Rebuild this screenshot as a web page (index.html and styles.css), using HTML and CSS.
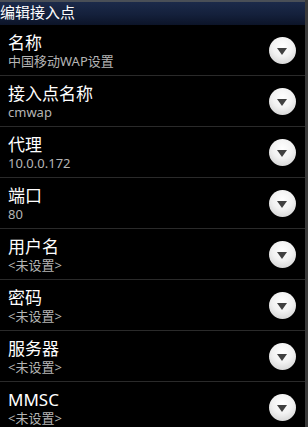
FILE: index.html
```html
<!DOCTYPE html>
<html lang="zh-CN">
<head>
    <meta charset="UTF-8">
    <meta name="viewport" content="width=device-width, initial-scale=1.0">
    <title>编辑接入点</title>
    <link rel="stylesheet" href="styles.css">
</head>
<body>
    <div id="screen">
        <div id="title-bar">编辑接入点</div>
        <div id="pref-list">
            <div class="pref-row">
                <div class="pref-text">
                    <p class="pref-title">名称</p>
                    <p class="pref-summary">中国移动WAP设置</p>
                </div>
                <span class="pref-arrow"></span>
            </div>
            <div class="pref-row">
                <div class="pref-text">
                    <p class="pref-title">接入点名称</p>
                    <p class="pref-summary">cmwap</p>
                </div>
                <span class="pref-arrow"></span>
            </div>
            <div class="pref-row">
                <div class="pref-text">
                    <p class="pref-title">代理</p>
                    <p class="pref-summary">10.0.0.172</p>
                </div>
                <span class="pref-arrow"></span>
            </div>
            <div class="pref-row">
                <div class="pref-text">
                    <p class="pref-title">端口</p>
                    <p class="pref-summary">80</p>
                </div>
                <span class="pref-arrow"></span>
            </div>
            <div class="pref-row">
                <div class="pref-text">
                    <p class="pref-title">用户名</p>
                    <p class="pref-summary">&lt;未设置&gt;</p>
                </div>
                <span class="pref-arrow"></span>
            </div>
            <div class="pref-row">
                <div class="pref-text">
                    <p class="pref-title">密码</p>
                    <p class="pref-summary">&lt;未设置&gt;</p>
                </div>
                <span class="pref-arrow"></span>
            </div>
            <div class="pref-row">
                <div class="pref-text">
                    <p class="pref-title">服务器</p>
                    <p class="pref-summary">&lt;未设置&gt;</p>
                </div>
                <span class="pref-arrow"></span>
            </div>
            <div class="pref-row">
                <div class="pref-text">
                    <p class="pref-title">MMSC</p>
                    <p class="pref-summary">&lt;未设置&gt;</p>
                </div>
                <span class="pref-arrow"></span>
            </div>
        </div>
    </div>
</body>
</html>
```

FILE: styles.css
```css
html, body {
    margin: 0;
    height: 100%;
    background-color: #000;
    overflow: hidden;
}

body {
    font-family: "Noto Sans", "Noto Sans CJK SC", sans-serif;
    color: #fff;
}

#screen {
    height: 100%;
    border-right: 3px solid #3a3a3a;
    box-sizing: border-box;
}

#title-bar {
    height: 25px;
    box-sizing: border-box;
    border-top: 2px solid #4a4f57;
    font-size: 15px;
    line-height: 21px;
    background: linear-gradient(to bottom, #1c2a4a 0%, #14203b 55%, #0c1428 100%);
}

.pref-row {
    display: flex;
    align-items: center;
    height: 50px;
    padding-left: 8px;
    padding-right: 9px;
    border-bottom: 1px solid #2a2a2a;
}

.pref-text {
    flex: 1;
    padding-top: 2px;
}

.pref-title {
    margin: 0;
    font-size: 17px;
    line-height: 21px;
}

.pref-summary {
    margin: 0;
    font-size: 13px;
    line-height: 17px;
    color: #b5b5b5;
}

.pref-arrow {
    position: relative;
    width: 27px;
    height: 27px;
    border-radius: 50%;
    background: radial-gradient(circle at 50% 35%, #ffffff 0%, #f2f2f2 45%, #c9c9c9 100%);
}

.pref-arrow::after {
    content: "";
    position: absolute;
    left: 8px;
    top: 11px;
    border-left: 5.5px solid transparent;
    border-right: 5.5px solid transparent;
    border-top: 7px solid #404040;
}
```
